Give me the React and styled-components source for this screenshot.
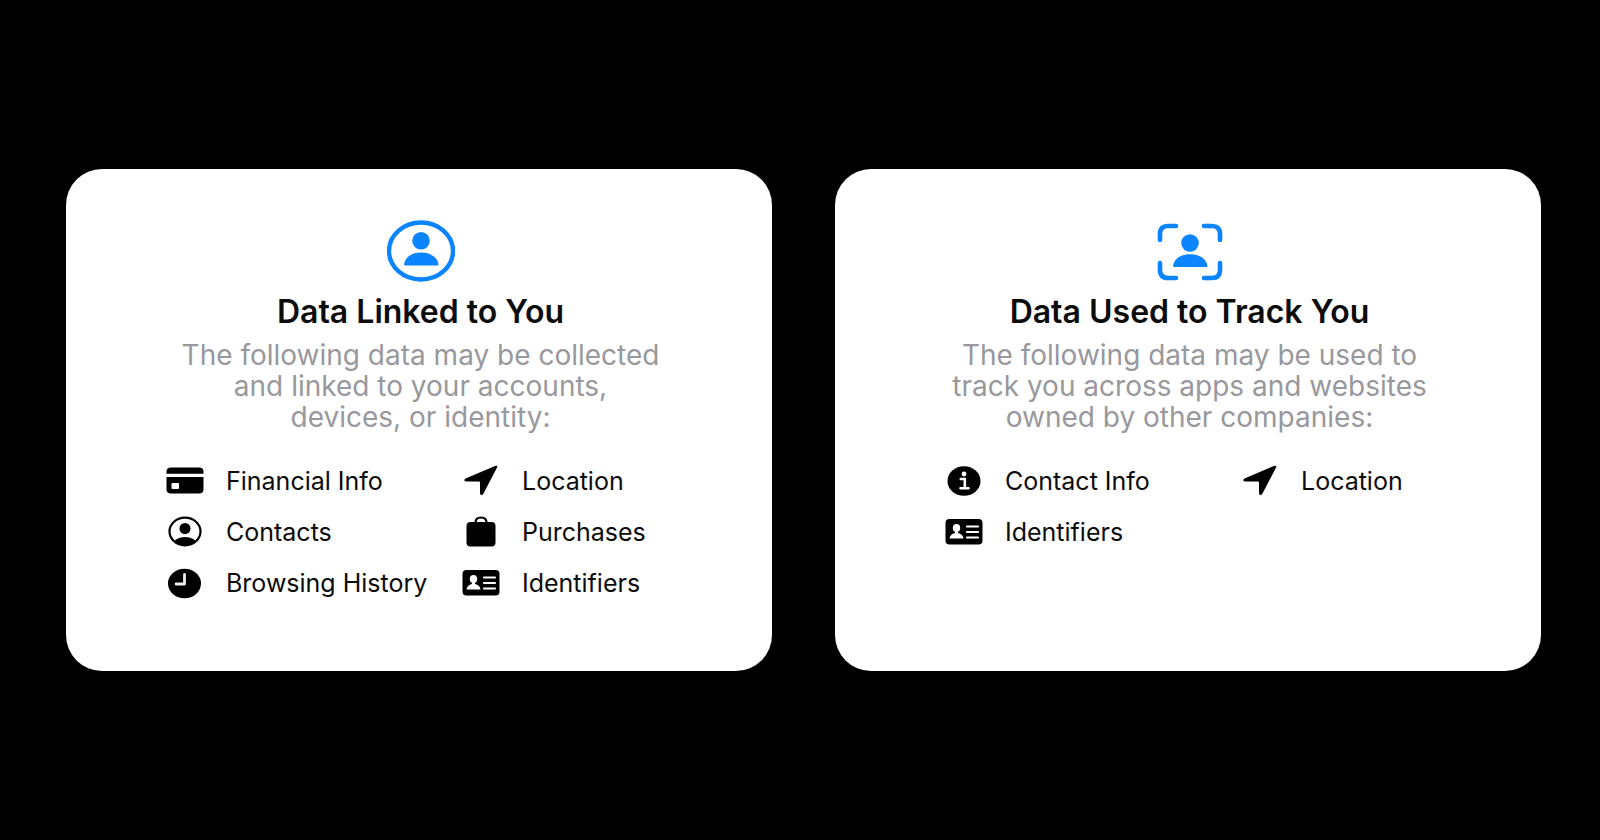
import React from "react";
import styled, { createGlobalStyle } from "styled-components";

// icons
const LinkedIcon = () => (
  <svg width="68" height="62" viewBox="0 0 68 62" aria-hidden="true">
    <ellipse cx="34" cy="31" rx="32" ry="28.5" fill="none" stroke="currentColor" strokeWidth="4.4" />
    <ellipse cx="34" cy="20.8" rx="8.8" ry="8.8" fill="currentColor" />
    <path d="M17 44.5C18 37 25 32.6 34 32.6S50.5 37 51.5 44.5Q51.5 45.5 50 45.5H18.5Q17 45.5 17 44.5Z" fill="currentColor" />
  </svg>
);

const TrackIcon = () => (
  <svg width="68" height="62" viewBox="0 0 68 62" aria-hidden="true">
    <g fill="none" stroke="currentColor" strokeWidth="4.6" strokeLinecap="round">
      <path d="M4 20V14Q4 6 12 6H20" />
      <path d="M48 6H56Q64 6 64 14V20" />
      <path d="M64 43V50Q64 58 56 58H48" />
      <path d="M20 58H12Q4 58 4 50V43" />
    </g>
    <ellipse cx="34" cy="23" rx="8.8" ry="8.8" fill="currentColor" />
    <path d="M17 46C18 38.6 25 34.2 34 34.2S50.5 38.6 51.5 46Q51.5 47 50 47H18.5Q17 47 17 46Z" fill="currentColor" />
  </svg>
);

const CardIcon = () => (
  <svg width="38" height="32" viewBox="0 0 38 32" aria-hidden="true">
    <path d="M0.5 8.8V6.500Q0.500 2.500 5 2.500H33Q37.500 2.500 37.500 6.500V8.800Z" />
    <path fillRule="evenodd" d="M0.5 12H37.5V24.5Q37.5 28.500 33 28.500H5Q0.500 28.500 0.500 24.500ZM6.500 18Q5.500 18 5.500 19V23Q5.500 24 6.500 24H12Q13 24 13 23V19Q13 18 12 18Z" />
  </svg>
);

const ContactsIcon = () => (
  <svg width="38" height="32" viewBox="0 0 38 32" aria-hidden="true">
    <clipPath id="contact-ring">
      <ellipse cx="19" cy="15.5" rx="15.5" ry="13.8" />
    </clipPath>
    <ellipse cx="19" cy="15.5" rx="15.5" ry="13.8" fill="none" stroke="currentColor" strokeWidth="2.2" />
    <ellipse cx="19" cy="12.500" rx="5.5" ry="5.5" />
    <ellipse cx="19" cy="28" rx="11.5" ry="7" clipPath="url(#contact-ring)" />
  </svg>
);

const ClockIcon = () => (
  <svg width="38" height="32" viewBox="0 0 38 32" aria-hidden="true">
    <ellipse cx="18.500" cy="16.5" rx="16.5" ry="14.8" />
    <path d="M18.500 7.500V17H10" fill="none" stroke="#eee" strokeWidth="2.8" strokeLinecap="round" strokeLinejoin="round" />
  </svg>
);

const LocationIcon = () => (
  <svg width="38" height="32" viewBox="0 0 38 32" aria-hidden="true">
    <path d="M3.5 13.6L33 0.900Q36.500 0 34.800 3L21.400 28.800Q19 31.800 18 28.300V17.500Q18 16.500 17 16.500H4Q0.800 15.800 3.500 13.600Z" />
  </svg>
);

const BagIcon = () => (
  <svg width="38" height="32" viewBox="0 0 38 32" aria-hidden="true">
    <path d="M13.5 8V6.5Q13.5 1.500 19 1.500T24.500 6.500V8" fill="none" stroke="currentColor" strokeWidth="2.2" />
    <rect x="4.5" y="6" width="29" height="24.5" rx="4" />
  </svg>
);

const IdIcon = () => (
  <svg width="38" height="32" viewBox="0 0 38 32" aria-hidden="true">
    <rect x="0.5" y="3" width="37" height="25.5" rx="4" />
    <g fill="#fff">
      <ellipse cx="11.5" cy="12" rx="3.7" ry="4" />
      <path d="M10 14H13V17Q18 18 18.5 22.5H4.500Q5 18 10 17Z" />
    </g>
    <path d="M22 10.5H33M22 16H33M22 21.5H33" stroke="#fff" strokeWidth="2.2" strokeLinecap="round" />
  </svg>
);

const InfoIcon = () => (
  <svg width="38" height="32" viewBox="0 0 38 32" aria-hidden="true">
    <ellipse cx="19" cy="16" rx="16.5" ry="14.8" />
    <circle cx="19" cy="9" r="2.4" fill="#fff" />
    <path d="M15.8 14H19.8V23M15.500 23.200H23.500" fill="none" stroke="#fff" strokeWidth="2.6" strokeLinecap="round" />
  </svg>
);

const cards = [
  {
    id: "linked",
    icon: LinkedIcon,
    title: "Data Linked to You",
    lines: ["The following data may be collected", "and linked to your accounts,", "devices, or identity:"],
    lastColumn: 210,
    items: [
      { icon: CardIcon, label: "Financial Info" },
      { icon: LocationIcon, label: "Location" },
      { icon: ContactsIcon, label: "Contacts" },
      { icon: BagIcon, label: "Purchases" },
      { icon: ClockIcon, label: "Browsing History" },
      { icon: IdIcon, label: "Identifiers" },
    ],
  },
  {
    id: "track",
    icon: TrackIcon,
    title: "Data Used to Track You",
    lines: ["The following data may be used to", "track you across apps and websites", "owned by other companies:"],
    lastColumn: 190,
    items: [
      { icon: InfoIcon, label: "Contact Info" },
      { icon: LocationIcon, label: "Location" },
      { icon: IdIcon, label: "Identifiers" },
    ],
  },
];

function PrivacyCard({ card }) {
  const Icon = card.icon;

  return (
    <Card aria-labelledby={card.id}>
      <Header>
        <Badge>
          <Icon />
        </Badge>
        <Title id={card.id}>{card.title}</Title>
        <Description>
          {card.lines.map((line) => (
            <span key={line}>{line}</span>
          ))}
        </Description>
      </Header>
      <List $last={card.lastColumn}>
        {card.items.map(({ icon: ItemIcon, label }) => (
          <Item key={label}>
            <ItemIcon />
            <span>{label}</span>
          </Item>
        ))}
      </List>
    </Card>
  );
}

function App() {
  return (
    <>
      <GlobalStyle />
      <Page>
        {cards.map((card) => (
          <PrivacyCard key={card.id} card={card} />
        ))}
      </Page>
    </>
  );
}

const GlobalStyle = createGlobalStyle`
  * {
    box-sizing: border-box;
    margin: 0;
    padding: 0;
  }

  body {
    background: #000;
    font-family: Inter, "Liberation Sans", sans-serif;
  }
`;

const Page = styled.main`
  min-height: 100vh;
  display: grid;
  grid-template-columns: repeat(auto-fit, minmax(600px, 1fr));
  align-content: center;
  gap: 63px;
  padding: 40px 59px 40px 66px;
`;

const Card = styled.section`
  display: flex;
  flex-direction: column;
  align-items: center;
  padding: 51px 0 63px;
  border-radius: 36px;
  background: #fff;
  color: #0c0c0c;
`;

const Header = styled.header`
  display: flex;
  flex-direction: column;
  align-items: center;
  padding-left: 3px;
`;

const Badge = styled.div`
  display: flex;
  color: #0a84ff;
`;

const Title = styled.h2`
  margin-top: 10px;
  font-size: 32px;
  font-weight: 600;
  line-height: 40px;
`;

const Description = styled.p`
  display: flex;
  flex-direction: column;
  margin-top: 8px;
  color: #98989d;
  font-size: 28px;
  line-height: 31px;
  text-align: center;
`;

const List = styled.ul`
  display: grid;
  grid-template-columns: 296px ${({ $last }) => $last}px;
  grid-auto-rows: 51px;
  margin-top: 22px;
  list-style: none;
`;

const Item = styled.li`
  display: flex;
  align-items: center;
  gap: 22px;
  font-size: 25px;
  line-height: 32px;

  svg {
    fill: #000;
    color: #000;
  }
`;

export default App;
